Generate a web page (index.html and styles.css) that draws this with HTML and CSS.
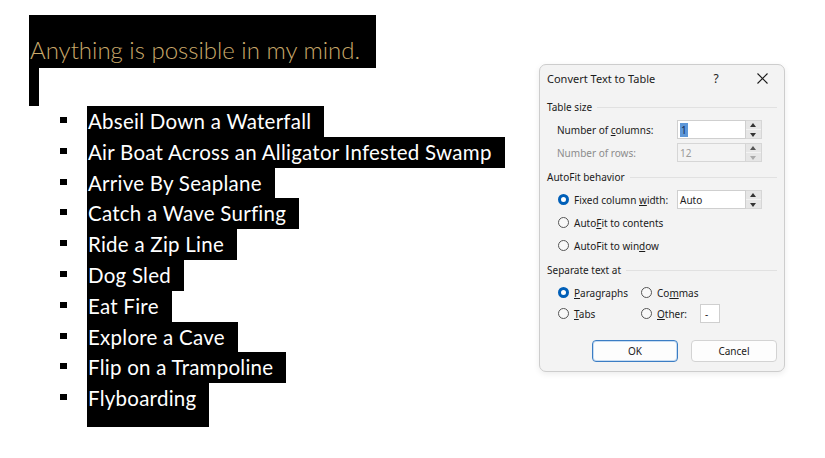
FILE: index.html
```html
<!DOCTYPE html>
<html>
<head>
<meta charset="utf-8">
<link rel="stylesheet" href="styles.css">
</head>
<body>
<div class="doc">
  <div class="title">Anything is possible in my mind.</div>
  <div class="para-mark"></div>
  <ul class="list">
    <li><span class="bullet"></span><span class="hl">Abseil Down a Waterfall</span></li>
    <li><span class="bullet"></span><span class="hl">Air Boat Across an Alligator Infested Swamp</span></li>
    <li><span class="bullet"></span><span class="hl">Arrive By Seaplane</span></li>
    <li><span class="bullet"></span><span class="hl">Catch a Wave Surfing</span></li>
    <li><span class="bullet"></span><span class="hl">Ride a Zip Line</span></li>
    <li><span class="bullet"></span><span class="hl">Dog Sled</span></li>
    <li><span class="bullet"></span><span class="hl">Eat Fire</span></li>
    <li><span class="bullet"></span><span class="hl">Explore a Cave</span></li>
    <li><span class="bullet"></span><span class="hl">Flip on a Trampoline</span></li>
    <li class="last"><span class="bullet"></span><span class="hl">Flyboarding</span></li>
  </ul>
</div>

<div class="dialog">
  <div class="titlebar">
    <span class="dlg-title">Convert Text to Table</span>
    <span class="help">?</span>
    <span class="close">
      <svg width="11" height="11" viewBox="0 0 11 11"><path d="M0.5 0.5 L10.5 10.5 M10.5 0.5 L0.5 10.5" stroke="#1a1a1a" stroke-width="1.1" fill="none"/></svg>
    </span>
  </div>

  <div class="section-head first"><span>Table size</span><span class="rule"></span></div>
  <div class="row">
    <span class="label">Number of <u>c</u>olumns:</span>
    <div class="spinbox">
      <div class="field"><span class="sel">1</span></div>
      <div class="spin"><span class="up"></span><span class="down"></span></div>
    </div>
  </div>
  <div class="row disabled">
    <span class="label">Number of rows:</span>
    <div class="spinbox">
      <div class="field">12</div>
      <div class="spin"><span class="up"></span><span class="down"></span></div>
    </div>
  </div>

  <div class="section-head"><span>AutoFit behavior</span><span class="rule"></span></div>
  <div class="row">
    <label class="radio-label"><span class="radio on"></span><span>Fixed column <u>w</u>idth:</span></label>
    <div class="spinbox">
      <div class="field">Auto</div>
      <div class="spin"><span class="up"></span><span class="down"></span></div>
    </div>
  </div>
  <div class="row"><label class="radio-label"><span class="radio"></span><span>Auto<u>F</u>it to contents</span></label></div>
  <div class="row"><label class="radio-label"><span class="radio"></span><span>AutoFit to win<u>d</u>ow</span></label></div>

  <div class="section-head sep"><span>Separate text at</span><span class="rule"></span></div>
  <div class="row grid2">
    <label class="radio-label col1"><span class="radio on"></span><span><u>P</u>aragraphs</span></label>
    <label class="radio-label"><span class="radio"></span><span>Co<u>m</u>mas</span></label>
  </div>
  <div class="row grid2 tight">
    <label class="radio-label col1"><span class="radio"></span><span><u>T</u>abs</span></label>
    <label class="radio-label"><span class="radio"></span><span><u>O</u>ther:</span><span class="other">-</span></label>
  </div>

  <div class="buttons">
    <button class="btn default">OK</button>
    <button class="btn">Cancel</button>
  </div>
</div>
</body>
</html>
```

FILE: styles.css
```css
html, body {
  margin: 0;
  padding: 0;
  background: #ffffff;
}

body {
  width: 825px;
  height: 458px;
  overflow: hidden;
  position: relative;
}

.doc {
  padding: 15px 0 0 29px;
}

.title {
  width: fit-content;
  background: #000;
  color: #c9a96b;
  font-family: "Lato", "Open Sans", sans-serif;
  font-weight: 300;
  font-size: 24px;
  line-height: 31px;
  padding: 19px 16px 3px 1px;
  white-space: nowrap;
}

.para-mark {
  width: 10px;
  height: 38px;
  background: #000;
}

.list {
  list-style: none;
  margin: 0;
  padding: 0;
}

.list li {
  display: flex;
  align-items: flex-start;
  height: 30.8px;
}

.list li.last {
  height: 44px;
}

.bullet {
  width: 7px;
  height: 6px;
  background: #000;
  margin: 11px 20px 0 31px;
  flex: none;
}

.hl {
  background: #000;
  color: #fff;
  font-family: "Lato", "Open Sans", sans-serif;
  font-size: 20.5px;
  letter-spacing: 0.25px;
  line-height: 30.8px;
  padding: 0 13px 0 1px;
  white-space: nowrap;
}

.list li.last .hl {
  padding-bottom: 13px;
}

/* Dialog */
.dialog {
  position: absolute;
  left: 539px;
  top: 64px;
  width: 246px;
  height: 308px;
  box-sizing: border-box;
  border: 1px solid #cdcdcd;
  border-radius: 7px;
  background: #f3f3f3;
  box-shadow: 0 2px 6px rgba(0,0,0,0.08);
  font-family: "Noto Sans", "Open Sans", sans-serif;
  font-size: 10px;
  color: #1b1b1b;
  padding: 0 7px 0 7px;
}

.titlebar {
  display: flex;
  align-items: center;
  height: 26px;
  margin-right: -7px;
}

.dlg-title {
  font-size: 11px;
  flex: 1;
}

.help {
  font-size: 12px;
  width: 20px;
  text-align: center;
  margin-right: 14px;
}

.close {
  width: 44px;
  display: flex;
  justify-content: center;
  align-items: center;
}

.close svg {
  display: block;
}

.section-head {
  display: flex;
  align-items: center;
  height: 16px;
  margin-top: 7px;
}

.section-head.first {
  margin-top: 8px;
}

.section-head.sep {
  margin-top: 7px;
}

.section-head .rule {
  flex: 1;
  height: 1px;
  background: #e1e1e1;
  margin-left: 5px;
}

.row {
  display: flex;
  align-items: center;
  height: 19px;
  margin-top: 4px;
  padding-left: 10px;
}

.section-head + .row {
  margin-top: 5px;
}

.row.tight {
  margin-top: 2px;
}

.label {
  width: 120px;
}

.row.disabled {
  color: #8c8c8c;
}

.spinbox {
  display: flex;
  height: 19px;
  width: 85px;
  margin-left: auto;
  margin-right: 15px;
  box-sizing: border-box;
}

.field {
  flex: 1;
  background: #fff;
  border: 1px solid #cfcfcf;
  display: flex;
  align-items: center;
  padding-left: 2px;
  box-sizing: border-box;
}

.row.disabled .field {
  background: #f3f3f3;
  border-color: #d6d6d6;
  color: #9a9a9a;
}

.sel {
  background: #5d97d8;
  color: #0c2855;
  padding: 0 1px;
  line-height: 14px;
}

.spin {
  width: 16px;
  display: flex;
  flex-direction: column;
  background: #e6e6e6;
  border: 1px solid #d6d6d6;
  border-left: none;
  box-sizing: border-box;
}

.spin span {
  flex: 1;
  position: relative;
}

.spin .up {
  border-bottom: 1px solid #f3f3f3;
}

.spin .up::after,
.spin .down::after {
  content: "";
  position: absolute;
  left: 4px;
  top: 2px;
  border-left: 3px solid transparent;
  border-right: 3px solid transparent;
}

.spin .up::after {
  border-bottom: 4px solid #333;
}

.spin .down::after {
  border-top: 4px solid #333;
  top: 3px;
}

.row.disabled .spin .up::after {
  border-bottom-color: #555;
}

.row.disabled .spin .down::after {
  border-top-color: #aaa;
}

.radio-label {
  display: flex;
  align-items: center;
  white-space: nowrap;
}

.grid2 .col1 {
  width: 83px;
}

.radio {
  width: 11px;
  height: 11px;
  box-sizing: border-box;
  border: 1px solid #555;
  border-radius: 50%;
  margin-right: 5px;
  margin-left: 1px;
  background: #f8f8f8;
  flex: none;
}

.radio.on {
  border: 3.5px solid #005fb8;
  background: #fff;
}

.other {
  display: inline-flex;
  align-items: center;
  width: 20px;
  height: 19px;
  box-sizing: border-box;
  border: 1px solid #cfcfcf;
  background: #fff;
  margin-left: 13px;
  padding-left: 4px;
}

.buttons {
  display: flex;
  justify-content: flex-end;
  gap: 13px;
  margin-top: 17px;
}

.btn {
  width: 86px;
  height: 22px;
  font-family: "Noto Sans", "Open Sans", sans-serif;
  font-size: 10px;
  color: #1b1b1b;
  background: #fdfdfd;
  border: 1px solid #d3d3d3;
  border-radius: 4px;
  padding: 0;
}

.btn.default {
  border: 1px solid #3b7dc4;
  box-shadow: inset 0 0 0 1px #c7dcf2;
}
```
